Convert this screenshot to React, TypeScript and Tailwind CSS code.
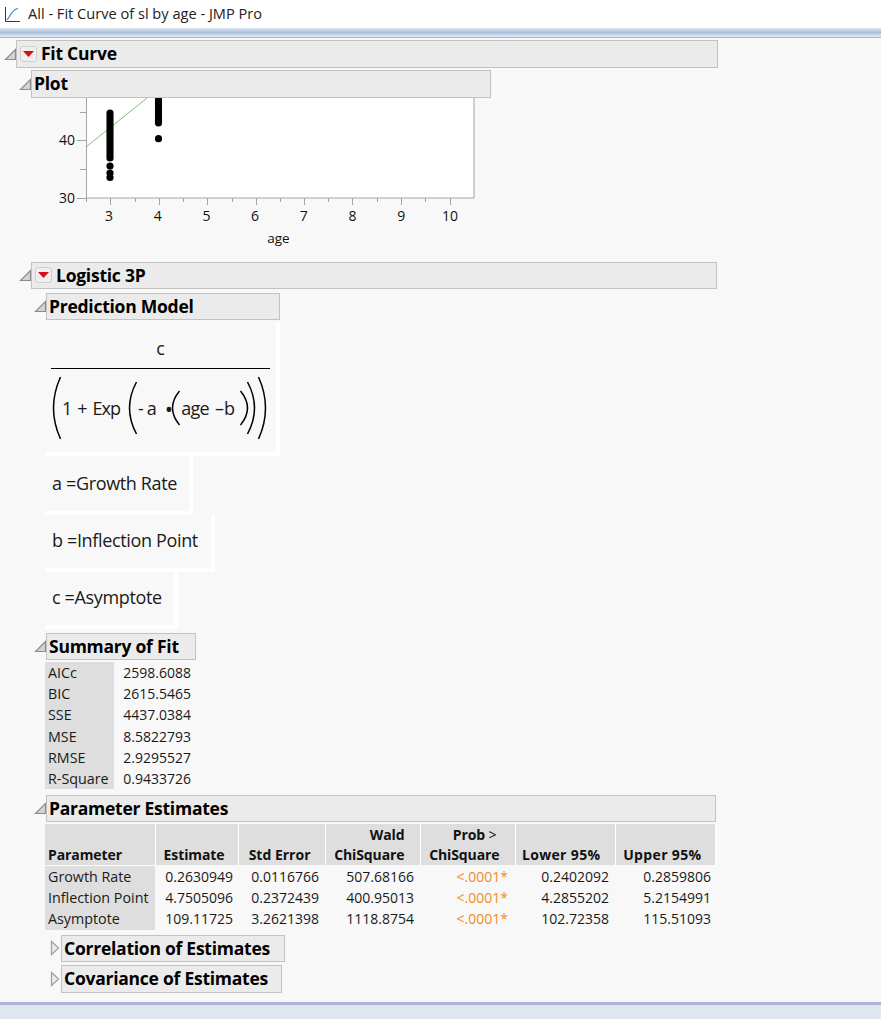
import type { ReactNode } from "react";

const fitRows = [
    ["AICc", "2598.6088"],
    ["BIC", "2615.5465"],
    ["SSE", "4437.0384"],
    ["MSE", "8.5822793"],
    ["RMSE", "2.9295527"],
    ["R-Square", "0.9433726"],
];

const estimateRows = [
    ["Growth Rate", "0.2630949", "0.0116766", "507.68166", "<.0001*", "0.2402092", "0.2859806"],
    ["Inflection Point", "4.7505096", "0.2372439", "400.95013", "<.0001*", "4.2855202", "5.2154991"],
    ["Asymptote", "109.11725", "3.2621398", "1118.8754", "<.0001*", "102.72358", "115.51093"],
];

const cellClasses = [
    "whitespace-nowrap bg-[#dedede] pl-[3px] text-[14.3px]",
    "pr-[5px] text-right",
    "pr-[6px] text-right",
    "pr-[6px] text-right",
    "pr-[7px] text-right text-[#f08c1e]",
    "pr-[6px] text-right",
    "pr-[4px] text-right",
];

const dotsAt3 = [113, 116, 119, 122, 125, 128, 131, 134, 137, 140, 143, 146, 149, 152, 155, 158, 166, 173, 177.5];
const dotsAt4 = [100, 103, 106, 109, 112, 115, 118, 120.5, 123, 138.7];
const xTicks = [86, 110, 135, 159, 183, 207, 232, 256, 280, 304, 328, 352, 377, 401, 425, 450];

function OpenTriangle() {
    return (
        <svg width="13" height="13" viewBox="0 0 13 13" className="shrink-0">
            <path d="M1.5 11.5 L11.5 1.5 V11.5 Z" fill="#d4d4d4" stroke="#8c8c8c" strokeWidth="1.2" />
        </svg>
    );
}

function ClosedTriangle() {
    return (
        <svg width="10" height="16" viewBox="0 0 10 16" className="shrink-0">
            <path d="M1.5 1.5 L8.5 8 L1.5 14.5 Z" fill="#ececec" stroke="#a0a0a0" strokeWidth="1.3" />
        </svg>
    );
}

function RedMenu() {
    return (
        <span className="mr-[4px] ml-[1px] flex h-[16px] w-[17px] shrink-0 items-center justify-center rounded-[3px] border border-[#cfcfcf] bg-[#efefef]">
            <svg width="11" height="6" viewBox="0 0 11 6">
                <path d="M0 0 H11 L5.5 6 Z" fill="#d2101c" />
            </svg>
        </span>
    );
}

function Heading({ title, width, height = 28, menu, closed }: { title: string; width: number; height?: number; menu?: boolean; closed?: boolean }) {
    return (
        <div className="flex items-center">
            <div className={closed ? "flex w-[15px] justify-end pr-[1px]" : "flex w-[15px] justify-start pl-[3px]"}>
                {closed ? <ClosedTriangle /> : <OpenTriangle />}
            </div>
            <div
                className="flex items-center border border-[#c2c2c2] bg-[#ebebeb] pb-[1px] pl-[2px] font-['Open_Sans',sans-serif] text-[17.5px] font-bold tracking-[-0.25px] text-black"
                style={{ width, height }}
            >
                {menu && <RedMenu />}
                {title}
            </div>
        </div>
    );
}

function Paren({ height, flip }: { height: number; flip?: boolean }) {
    return (
        <svg width="11" height={height} viewBox={`0 0 11 ${height}`} className={flip ? "shrink-0 -scale-x-100" : "shrink-0"}>
            <path d={`M9.5 1 Q-4.5 ${height / 2} 9.5 ${height - 1}`} fill="none" stroke="#000" strokeWidth="1.5" />
        </svg>
    );
}

function PlotSvg() {
    return (
        <svg width="500" height="152" viewBox="16 98 500 152" className="block font-['Open_Sans',sans-serif]">
            <rect x="86.5" y="90" width="387.5" height="108" fill="#fff" stroke="#a3a3a3" />
            <path d="M86 147 L147 98" stroke="#74c476" strokeWidth="1" fill="none" />
            {dotsAt3.map((y) => (
                <circle key={y} cx="110" cy={y} r="3.6" fill="#000" />
            ))}
            {dotsAt4.map((y) => (
                <circle key={y} cx="158.5" cy={y} r="3.6" fill="#000" />
            ))}
            <path d="M80 112.5 H86 M80 169.5 H86 M77 140.5 H86 M77 198.5 H86" stroke="#a3a3a3" />
            {xTicks.map((x, i) => (
                <path key={x} d={`M${x + 0.5} 198 V${i % 2 === 0 ? 202 : 205}`} stroke="#a3a3a3" />
            ))}
            <text x="75" y="145" textAnchor="end" fontSize="14" fill="#111">40</text>
            <text x="75" y="203" textAnchor="end" fontSize="14" fill="#111">30</text>
            {["3", "4", "5", "6", "7", "8", "9", "10"].map((label, i) => (
                <text key={label} x={109 + i * 48.7} y="221" textAnchor="middle" fontSize="14" fill="#111">
                    {label}
                </text>
            ))}
            <text x="278.5" y="243" textAnchor="middle" fontSize="13.5" fill="#111">age</text>
        </svg>
    );
}

function FormulaBox({ width, height, children }: { width: number; height: number; children: ReactNode }) {
    return (
        <div className="flex items-center border-r-4 border-b-4 border-white pl-[6px] text-[18px] tracking-[-0.35px] text-[#1a1a1a]" style={{ width, height }}>
            {children}
        </div>
    );
}

function FormulaText({ children }: { children: ReactNode }) {
    return <span className="mb-[2px] ml-[1px]">{children}</span>;
}

function HeadCell({ lines, width, align = "text-right" }: { lines: ReactNode[]; width: number; align?: string }) {
    return (
        <th className={`border-r border-b border-r-white border-b-[#f8f8f8] bg-clip-padding bg-[#dedede] pr-[13px] align-bottom text-[14px] leading-[20px] font-bold text-[#111] ${lines.length > 1 ? "" : "h-[41px]"} ${align}`} style={{ width }}>
            {lines.map((line, i) => (
                <div key={i}>{line}</div>
            ))}
        </th>
    );
}

export default function App() {
    return (
        <div className="flex h-[1019px] w-[881px] flex-col overflow-hidden bg-[#f8f8f8] font-['Open_Sans',sans-serif] text-[14px] text-[#1a1a1a]">
            <div className="flex h-[28px] items-center bg-white pl-[5px] text-[14.6px] text-[#222]">
                <svg width="15" height="15" viewBox="0 0 15 15" className="mr-[8px]">
                    <path d="M0.5 0 V14.5 H15" fill="none" stroke="#1d3b78" strokeWidth="1" />
                    <path d="M1.5 13 C5 12 5 3 13 1.5" fill="none" stroke="#4a7fb0" strokeWidth="1.1" />
                </svg>
                All - Fit Curve of sl by age - JMP Pro
            </div>
            <div className="h-[10px] border-b border-[#9fb4d3] bg-gradient-to-b from-[#dfe8f3] via-[#a9c0dc] to-[#e6edf5]" />

            <div className="flex-1 pt-[2px] pl-[1px]">
                <Heading title="Fit Curve" width={702} menu />
                <div className="mt-[2px] ml-[15px]">
                    <Heading title="Plot" width={460} />
                    <PlotSvg />

                    <div className="mt-[12px]">
                        <Heading title="Logistic 3P" width={686} height={27} menu />
                    </div>
                    <div className="mt-[4px] ml-[15px]">
                        <Heading title="Prediction Model" width={234} height={27} />

                        <div className="mt-[2px] ml-[14px] flex flex-col">
                            <FormulaBox width={235} height={134}>
                                <div className="flex flex-col pb-[3px] tracking-normal">
                                    <div className="flex h-[45px] w-[219px] items-center justify-center border-b border-black pt-[5px]">c</div>
                                    <div className="flex h-[79px] w-[219px] items-center whitespace-nowrap">
                                        <Paren height={64} />
                                        <span>1</span>
                                        <span className="ml-[5px]">+</span>
                                        <span className="ml-[5px] tracking-[-1px]">Exp</span>
                                        <span className="ml-[7px]"><Paren height={54} /></span>
                                        <span>-</span>
                                        <span className="ml-[3px]">a</span>
                                        <span className="ml-[8px] text-[22px]">•</span>
                                        <span className="-ml-[3px]"><Paren height={36} /></span>
                                        <span className="tracking-[-0.7px]">age</span>
                                        <span className="ml-[6px]">–</span>
                                        <span>b</span>
                                        <span className="ml-[4px]"><Paren height={36} flip /></span>
                                        <span className="-ml-[4px]"><Paren height={54} flip /></span>
                                        <span><Paren height={64} flip /></span>
                                    </div>
                                </div>
                            </FormulaBox>
                            <div className="mt-[1px]">
                                <FormulaBox width={148} height={58}><FormulaText>a =Growth Rate</FormulaText></FormulaBox>
                            </div>
                            <FormulaBox width={170} height={57}><FormulaText>b =Inflection Point</FormulaText></FormulaBox>
                            <FormulaBox width={133} height={57}><FormulaText>c =Asymptote</FormulaText></FormulaBox>
                        </div>

                        <div className="mt-[4px]">
                            <Heading title="Summary of Fit" width={150} height={27} />
                        </div>
                        <table className="mt-[2px] ml-[14px] border-collapse">
                            <tbody>
                                {fitRows.map(([label, value]) => (
                                    <tr key={label} className="h-[21.2px] leading-[21px]">
                                        <td className="w-[69px] bg-[#dedede] pl-[3px] text-[14.3px]">{label}</td>
                                        <td className="w-[78px] pr-[1px] text-right">{value}</td>
                                    </tr>
                                ))}
                            </tbody>
                        </table>

                        <div className="mt-[6px]">
                            <Heading title="Parameter Estimates" width={670} height={27} />
                        </div>
                        <table className="mt-[2px] ml-[14px] table-fixed border-collapse">
                            <thead>
                                <tr>
                                    <HeadCell lines={["Parameter"]} width={110} align="text-left !pl-[3px] tracking-[-0.1px]" />
                                    <HeadCell lines={["Estimate"]} width={83} align="text-right tracking-[-0.1px]" />
                                    <HeadCell lines={["Std Error"]} width={87} align="text-right !pr-[14px]" />
                                    <HeadCell lines={["Wald", "ChiSquare"]} width={95} align="text-right !pr-[15px] tracking-[-0.1px]" />
                                    <HeadCell
                                        lines={[
                                            <span key="prob" className="mr-[3px]">
                                                Prob <span className="font-normal">&gt;</span>
                                            </span>,
                                            "ChiSquare",
                                        ]}
                                        width={95}
                                        align="text-right !pr-[15px] tracking-[-0.1px]"
                                    />
                                    <HeadCell lines={["Lower 95%"]} width={100} align="text-right !pr-[14px] tracking-[0.35px]" />
                                    <HeadCell lines={["Upper 95%"]} width={100} align="text-right tracking-[0.35px]" />
                                </tr>
                            </thead>
                            <tbody>
                                {estimateRows.map((row) => (
                                    <tr key={row[0]} className="h-[21.5px] leading-[21px]">
                                        {row.map((cell, j) => (
                                            <td key={j} className={cellClasses[j]}>
                                                {cell}
                                            </td>
                                        ))}
                                    </tr>
                                ))}
                            </tbody>
                        </table>

                        <div className="mt-[5px] flex flex-col gap-[3px] pl-[15px]">
                            <Heading title="Correlation of Estimates" width={224} height={27} closed />
                            <Heading title="Covariance of Estimates" width={221} height={28} closed />
                        </div>
                    </div>
                </div>
            </div>

            <div className="h-[17px] border-t-[3px] border-[#aab4d4] bg-[#e0e7f1]" />
        </div>
    );
}
